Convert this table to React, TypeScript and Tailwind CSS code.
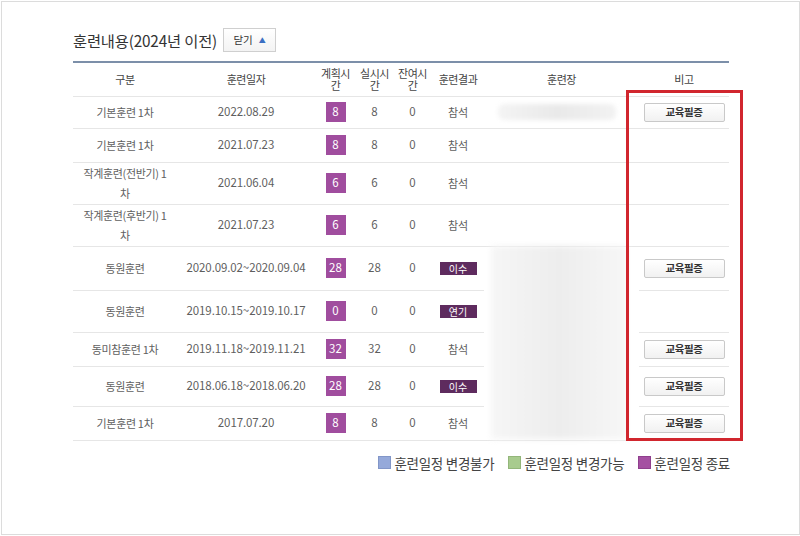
const FONT = { fontFamily: '"Noto Sans CJK KR", "Noto Sans", sans-serif' }

type Row = {
  type: string[]
  date: string
  plan: number
  done: number
  left: number
  result: string
  cert: boolean
  h: string
}

const rows: Row[] = [
  { type: ['기본훈련 1차'], date: '2022.08.29', plan: 8, done: 8, left: 0, result: '참석', cert: true, h: 'h-[32px]' },
  { type: ['기본훈련 1차'], date: '2021.07.23', plan: 8, done: 8, left: 0, result: '참석', cert: false, h: 'h-[34px]' },
  { type: ['작계훈련(전반기) 1', '차'], date: '2021.06.04', plan: 6, done: 6, left: 0, result: '참석', cert: false, h: 'h-[42px]' },
  { type: ['작계훈련(후반기) 1', '차'], date: '2021.07.23', plan: 6, done: 6, left: 0, result: '참석', cert: false, h: 'h-[42px]' },
  { type: ['동원훈련'], date: '2020.09.02~2020.09.04', plan: 28, done: 28, left: 0, result: '이수', cert: true, h: 'h-[44px]' },
  { type: ['동원훈련'], date: '2019.10.15~2019.10.17', plan: 0, done: 0, left: 0, result: '연기', cert: false, h: 'h-[42px]' },
  { type: ['동미참훈련 1차'], date: '2019.11.18~2019.11.21', plan: 32, done: 32, left: 0, result: '참석', cert: true, h: 'h-[34px]' },
  { type: ['동원훈련'], date: '2018.06.18~2018.06.20', plan: 28, done: 28, left: 0, result: '이수', cert: true, h: 'h-[40px]' },
  { type: ['기본훈련 1차'], date: '2017.07.20', plan: 8, done: 8, left: 0, result: '참석', cert: true, h: 'h-[34px]' },
]

function CertButton() {
  return (
    <button
      type="button"
      className="w-[81px] h-[19px] border border-[#c9c9c9] rounded-[2px] bg-gradient-to-b from-white to-[#f1f1f1] text-[10.5px] font-bold text-[#333] tracking-[-0.04em] leading-none"
    >
      교육필증
    </button>
  )
}

function ResultCell({ value }: { value: string }) {
  if (value === '참석') return <span>{value}</span>
  return (
    <span className="inline-flex items-center justify-center w-[37px] h-[13px] bg-[#5e2b5e] text-white text-[10px] leading-none">
      {value}
    </span>
  )
}

function Legend({ color, label }: { color: string; label: string }) {
  return (
    <div className="flex items-center gap-[3px]">
      <span className={`w-[13px] h-[13px] border ${color}`} />
      <span className="text-[13.5px] text-[#444] tracking-[-0.02em]">{label}</span>
    </div>
  )
}

export default function App() {
  return (
    <div className="w-[800px] h-[536px] bg-white" style={FONT}>
      <div className="w-[799px] h-[534px] border border-[#dcdcdc] mt-[1px] ml-[1px] pl-[71px] pt-[25px]">
        {/* 제목 + 닫기 */}
        <div className="flex items-center h-[26px]">
          <h2 className="text-[15.3px] text-[#333] tracking-[-0.01em] font-normal">훈련내용(2024년 이전)</h2>
          <button
            type="button"
            className="ml-[6px] w-[53px] h-[24px] border border-[#cfcfcf] bg-gradient-to-b from-white to-[#f3f3f3] flex items-center justify-center gap-[6px] text-[10.5px] text-[#333]"
          >
            닫기
            <span className="text-[7px] text-[#3b6fc2]">▲</span>
          </button>
        </div>

        <div className="relative mt-[8px] w-[656px]">
          <table className="w-[656px] table-fixed border-collapse text-[11.5px] text-[#5f5f5f] text-center">
            <colgroup>
              <col className="w-[104px]" />
              <col className="w-[138px]" />
              <col className="w-[41px]" />
              <col className="w-[37px]" />
              <col className="w-[39px]" />
              <col className="w-[52px]" />
              <col className="w-[155px]" />
              <col className="w-[90px]" />
            </colgroup>
            <thead>
              <tr className="h-[34px] border-t-2 border-[#7c8fa9] border-b border-b-[#e6e6e6] text-[11px] text-[#444] tracking-[-0.04em] leading-[12px]">
                <th className="font-normal">구분</th>
                <th className="font-normal">훈련일자</th>
                <th className="font-normal">계획시<br />간</th>
                <th className="font-normal">실시시<br />간</th>
                <th className="font-normal">잔여시<br />간</th>
                <th className="font-normal">훈련결과</th>
                <th className="font-normal">훈련장</th>
                <th className="font-normal">비고</th>
              </tr>
            </thead>
            <tbody>
              {rows.map((r, i) => (
                <tr key={i} className={`${r.h} border-b border-[#e6e6e6]`}>
                  <td className="text-[11px] tracking-[-0.03em] leading-[20px]">
                    {r.type.map((t, j) => (
                      <div key={j}>{t}</div>
                    ))}
                  </td>
                  <td className="tracking-[-0.01em]">{r.date}</td>
                  <td>
                    <span className="inline-flex items-center justify-center min-w-[20px] h-[20px] px-[2px] bg-[#a04d9e] text-white text-[11.5px] leading-none">
                      {r.plan}
                    </span>
                  </td>
                  <td>{r.done}</td>
                  <td>{r.left}</td>
                  <td className="text-[11px]">
                    <ResultCell value={r.result} />
                  </td>
                  {i === 0 && (
                    <td>
                      <div className="ml-[14px] w-[118px] h-[16px] rounded-[6px] bg-gradient-to-r from-[#f4f4f4] via-[#e9e9e9] to-[#f2f2f2] blur-[2px]" />
                    </td>
                  )}
                  {i > 0 && i < 4 && <td />}
                  {i === 4 && (
                    <td rowSpan={5} className="p-0 align-top">
                      <div className="ml-[7px] w-[136px] h-[193px] -mt-[1px] bg-gradient-to-r from-[#f6f6f6] via-[#ededed] to-[#f7f7f7] blur-[3px]" />
                    </td>
                  )}
                  <td>{r.cert && <CertButton />}</td>
                </tr>
              ))}
            </tbody>
          </table>

          {/* 강조 표시 박스 */}
          <div className="absolute left-[553px] top-[29px] w-[117px] h-[351px] border-[3px] border-[#d1262e]" />
        </div>

        {/* 범례 */}
        <div className="w-[657px] flex justify-end gap-[14px] mt-[12px]">
          <Legend color="bg-[#95a9da] border-[#8296c8]" label="훈련일정 변경불가" />
          <Legend color="bg-[#a8cb8e] border-[#93b67a]" label="훈련일정 변경가능" />
          <Legend color="bg-[#a550a2] border-[#8f3f8d]" label="훈련일정 종료" />
        </div>
      </div>
    </div>
  )
}
